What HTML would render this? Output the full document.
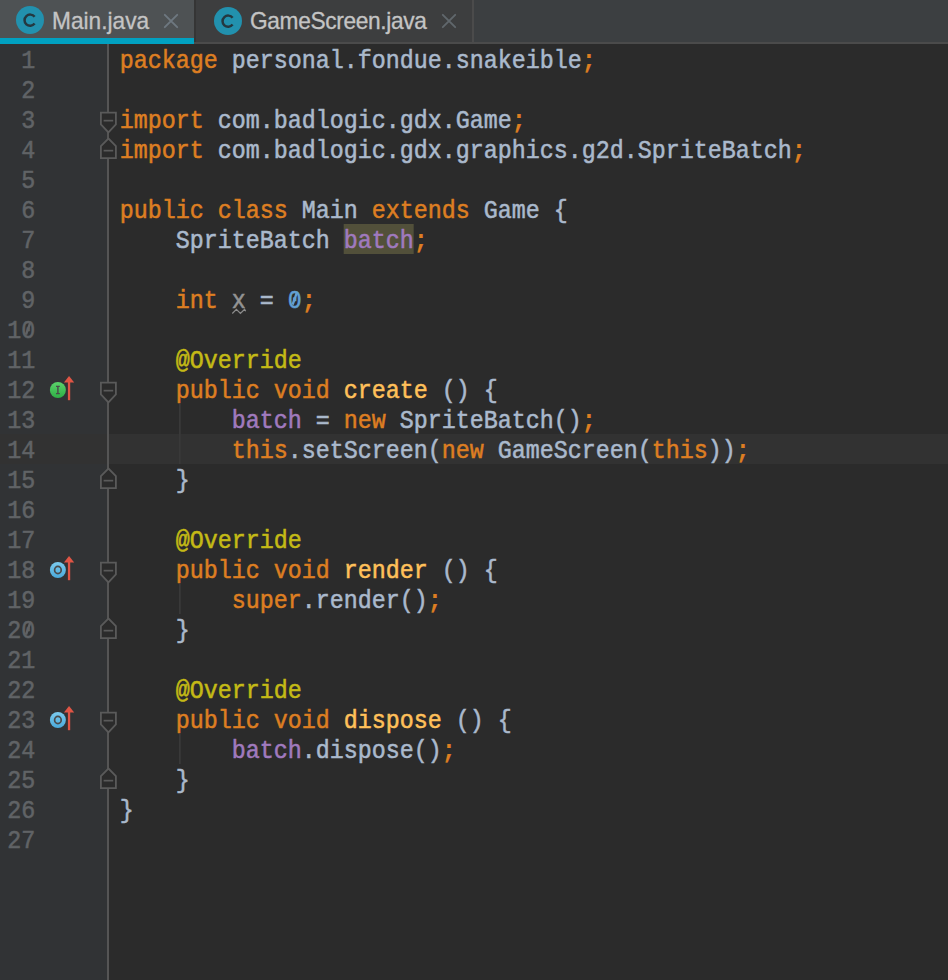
<!DOCTYPE html>
<html><head><meta charset="utf-8">
<style>
html,body{margin:0;padding:0;}
body{width:948px;height:980px;overflow:hidden;background:#2B2B2B;position:relative;font-family:"Liberation Sans",sans-serif;}
.abs{position:absolute;}
#tabs{position:absolute;left:0;top:0;width:948px;height:44px;background:#3C3F41;}
#gutter{position:absolute;left:0;top:44px;width:108px;height:936px;background:#313335;}
.curline{position:absolute;left:0;width:948px;height:30px;background:#323232;}
.ln{position:absolute;left:119.7px;height:30px;line-height:30px;font-family:"Liberation Mono",monospace;font-size:23.33px;white-space:pre;color:#AAB9CC;}
.ln span{position:relative;top:3.4px;}
.ln{transform:scaleY(1.07);transform-origin:0 23.6px;-webkit-text-stroke:0.5px;}
.num{position:absolute;left:0;width:35.3px;text-align:right;height:30px;line-height:30px;font-family:"Liberation Mono",monospace;font-size:23.33px;color:#606366;padding-top:3.4px;box-sizing:border-box;transform:scaleY(1.07);transform-origin:0 23.6px;-webkit-text-stroke:0.5px;}
.sc{color:#DD7E22;font-weight:bold;-webkit-text-stroke:0.2px;} .k{color:#DD7E22;} .d{color:#AAB9CC;} .f{color:#A07ABE;} .m{color:#FFC05A;} .a{color:#C4BA16;} .n{color:#62A0D4;} .u{color:#939393;}
.tab{position:absolute;top:6px;font-size:22.7px;line-height:30px;color:#C4C4C4;transform:scaleY(1.04);-webkit-text-stroke:0.3px;}
svg{position:absolute;left:0;top:0;}
</style></head><body>
<div id="tabs">
  <div class="abs" style="left:0;top:0;width:194px;height:38px;background:#4E5254;"></div>
  <div class="abs" style="left:0;top:38px;width:194px;height:6px;background:#01A1C1;"></div>
  <div class="abs" style="left:196px;top:0;width:276px;height:42px;background:#3D3E3F;"></div>
  <div class="abs" style="left:194px;top:42px;width:754px;height:2px;background:#4B4B4B;"></div>
  <div class="abs" style="left:194px;top:0;width:2px;height:42px;background:#353535;"></div>
  <div class="abs" style="left:472px;top:0;width:2px;height:42px;background:#4B4B4B;"></div>
  <div class="tab" style="left:52px;">Main.java</div>
  <div class="tab" style="left:250px;letter-spacing:-0.33px;">GameScreen.java</div>
</div>
<div id="gutter"></div>
<div class="curline" style="top:434px"></div>
<svg width="948" height="980" viewBox="0 0 948 980">
<defs>
<linearGradient id="gg" x1="0" y1="0" x2="0" y2="1"><stop offset="0" stop-color="#5BD36B"/><stop offset="1" stop-color="#2FAE45"/></linearGradient>
<linearGradient id="bg" x1="0" y1="0" x2="0" y2="1"><stop offset="0" stop-color="#7CCBEE"/><stop offset="1" stop-color="#4AA9DA"/></linearGradient>
</defs>
<rect x="107" y="44" width="2" height="936" fill="#555555"/><rect x="179" y="404" width="1.8" height="60" fill="#393939"/><rect x="179" y="584" width="1.8" height="30" fill="#393939"/><rect x="179" y="734" width="1.8" height="30" fill="#393939"/><rect x="343.7" y="224" width="70" height="30" fill="#52503A"/><path d="M100.9,112.7 H115.9 V124.3 L108.4,132.4 L100.9,124.3 Z" fill="#2B2B2B" stroke="#5A5A5A" stroke-width="1.8"/><rect x="103.6" y="119.8" width="9.6" height="1.7" fill="#5A5A5A"/><path d="M100.9,382.7 H115.9 V394.3 L108.4,402.4 L100.9,394.3 Z" fill="#2B2B2B" stroke="#5A5A5A" stroke-width="1.8"/><rect x="103.6" y="389.8" width="9.6" height="1.7" fill="#5A5A5A"/><path d="M100.9,562.7 H115.9 V574.3 L108.4,582.4 L100.9,574.3 Z" fill="#2B2B2B" stroke="#5A5A5A" stroke-width="1.8"/><rect x="103.6" y="569.8" width="9.6" height="1.7" fill="#5A5A5A"/><path d="M100.9,712.7 H115.9 V724.3 L108.4,732.4 L100.9,724.3 Z" fill="#2B2B2B" stroke="#5A5A5A" stroke-width="1.8"/><rect x="103.6" y="719.8" width="9.6" height="1.7" fill="#5A5A5A"/><path d="M108.4,138.5 L115.9,146.2 V158.2 H100.9 V146.2 Z" fill="#2B2B2B" stroke="#5A5A5A" stroke-width="1.8"/><rect x="103.6" y="149.8" width="9.6" height="1.7" fill="#5A5A5A"/><path d="M108.4,468.5 L115.9,476.2 V488.2 H100.9 V476.2 Z" fill="#2B2B2B" stroke="#5A5A5A" stroke-width="1.8"/><rect x="103.6" y="479.8" width="9.6" height="1.7" fill="#5A5A5A"/><path d="M108.4,618.5 L115.9,626.2 V638.2 H100.9 V626.2 Z" fill="#2B2B2B" stroke="#5A5A5A" stroke-width="1.8"/><rect x="103.6" y="629.8" width="9.6" height="1.7" fill="#5A5A5A"/><path d="M108.4,768.5 L115.9,776.2 V788.2 H100.9 V776.2 Z" fill="#2B2B2B" stroke="#5A5A5A" stroke-width="1.8"/><rect x="103.6" y="779.8" width="9.6" height="1.7" fill="#5A5A5A"/><circle cx="57.9" cy="390" r="8" fill="url(#gg)"/><path d="M56,386.4 H59.8 M57.9,386.4 V393.6 M56,393.6 H59.8" stroke="#4A4A4A" stroke-width="1.4" fill="none"/><rect x="67.9" y="381.4" width="2.3" height="18.8" fill="#E05545"/><path d="M69.05,375.9 L74.2,382.4 L63.9,382.4 Z" fill="#E05545"/><circle cx="57.9" cy="570" r="8" fill="url(#bg)"/><ellipse cx="57.9" cy="570" rx="3.3" ry="3.6" stroke="#4A4A4A" stroke-width="1.7" fill="none"/><rect x="67.9" y="561.4" width="2.3" height="18.8" fill="#E05545"/><path d="M69.05,555.9 L74.2,562.4 L63.9,562.4 Z" fill="#E05545"/><circle cx="57.9" cy="720" r="8" fill="url(#bg)"/><ellipse cx="57.9" cy="720" rx="3.3" ry="3.6" stroke="#4A4A4A" stroke-width="1.7" fill="none"/><rect x="67.9" y="711.4" width="2.3" height="18.8" fill="#E05545"/><path d="M69.05,705.9 L74.2,712.4 L63.9,712.4 Z" fill="#E05545"/><polyline points="232.3,313.5 236.4,309.3 240.4,313.5 244.6,309.3 245.7,311.2" fill="none" stroke="#8C8C8C" stroke-width="1.2"/><circle cx="30" cy="20" r="14" fill="#2291AE"/><path d="M34.6,16.8 A5.6,5.6 0 1 0 34.6,23.6" fill="none" stroke="#243840" stroke-width="2.5"/><circle cx="228" cy="21" r="14" fill="#2291AE"/><path d="M232.6,17.8 A5.6,5.6 0 1 0 232.6,24.6" fill="none" stroke="#243840" stroke-width="2.5"/><path d="M164.8,14.8 L177.2,27.2 M177.2,14.8 L164.8,27.2" stroke="#6E7880" stroke-width="1.9" stroke-linecap="round"/><path d="M442.8,14.8 L455.2,27.2 M455.2,14.8 L442.8,27.2" stroke="#60676C" stroke-width="1.9" stroke-linecap="round"/>
</svg>
<div class="num" style="top:44px">1</div><div class="num" style="top:74px">2</div><div class="num" style="top:104px">3</div><div class="num" style="top:134px">4</div><div class="num" style="top:164px">5</div><div class="num" style="top:194px">6</div><div class="num" style="top:224px">7</div><div class="num" style="top:254px">8</div><div class="num" style="top:284px">9</div><div class="num" style="top:314px">10</div><div class="num" style="top:344px">11</div><div class="num" style="top:374px">12</div><div class="num" style="top:404px">13</div><div class="num" style="top:434px">14</div><div class="num" style="top:464px">15</div><div class="num" style="top:494px">16</div><div class="num" style="top:524px">17</div><div class="num" style="top:554px">18</div><div class="num" style="top:584px">19</div><div class="num" style="top:614px">20</div><div class="num" style="top:644px">21</div><div class="num" style="top:674px">22</div><div class="num" style="top:704px">23</div><div class="num" style="top:734px">24</div><div class="num" style="top:764px">25</div><div class="num" style="top:794px">26</div><div class="num" style="top:824px">27</div>
<div class="ln" style="top:44px"><span class="k">package</span><span class="d"> personal.fondue.snakeible</span><span class="sc">;</span></div><div class="ln" style="top:104px"><span class="k">import</span><span class="d"> com.badlogic.gdx.Game</span><span class="sc">;</span></div><div class="ln" style="top:134px"><span class="k">import</span><span class="d"> com.badlogic.gdx.graphics.g2d.SpriteBatch</span><span class="sc">;</span></div><div class="ln" style="top:194px"><span class="k">public class</span><span class="d"> Main </span><span class="k">extends</span><span class="d"> Game {</span></div><div class="ln" style="top:224px"><span class="d">    SpriteBatch </span><span class="f">batch</span><span class="sc">;</span></div><div class="ln" style="top:284px"><span class="d">    </span><span class="k">int</span><span class="d"> </span><span class="u">x</span><span class="d"> = </span><span class="n">0</span><span class="sc">;</span></div><div class="ln" style="top:344px"><span class="d">    </span><span class="a">@Override</span></div><div class="ln" style="top:374px"><span class="d">    </span><span class="k">public void</span><span class="d"> </span><span class="m">create</span><span class="d"> () {</span></div><div class="ln" style="top:404px"><span class="d">        </span><span class="f">batch</span><span class="d"> = </span><span class="k">new</span><span class="d"> SpriteBatch()</span><span class="sc">;</span></div><div class="ln" style="top:434px"><span class="d">        </span><span class="k">this</span><span class="d">.setScreen(</span><span class="k">new</span><span class="d"> GameScreen(</span><span class="k">this</span><span class="d">))</span><span class="sc">;</span></div><div class="ln" style="top:464px"><span class="d">    }</span></div><div class="ln" style="top:524px"><span class="d">    </span><span class="a">@Override</span></div><div class="ln" style="top:554px"><span class="d">    </span><span class="k">public void</span><span class="d"> </span><span class="m">render</span><span class="d"> () {</span></div><div class="ln" style="top:584px"><span class="d">        </span><span class="k">super</span><span class="d">.render()</span><span class="sc">;</span></div><div class="ln" style="top:614px"><span class="d">    }</span></div><div class="ln" style="top:674px"><span class="d">    </span><span class="a">@Override</span></div><div class="ln" style="top:704px"><span class="d">    </span><span class="k">public void</span><span class="d"> </span><span class="m">dispose</span><span class="d"> () {</span></div><div class="ln" style="top:734px"><span class="d">        </span><span class="f">batch</span><span class="d">.dispose()</span><span class="sc">;</span></div><div class="ln" style="top:764px"><span class="d">    }</span></div><div class="ln" style="top:794px"><span class="d">}</span></div>
<svg width="948" height="980" viewBox="0 0 948 980"><path d="M292.6,304.6 L296.8,292.8" stroke="#62A0D4" stroke-width="2.4"/><path d="M26.0,334.6 L30.2,322.8" stroke="#606366" stroke-width="2.4"/><path d="M26.0,634.6 L30.2,622.8" stroke="#606366" stroke-width="2.4"/></svg>
</body></html>
